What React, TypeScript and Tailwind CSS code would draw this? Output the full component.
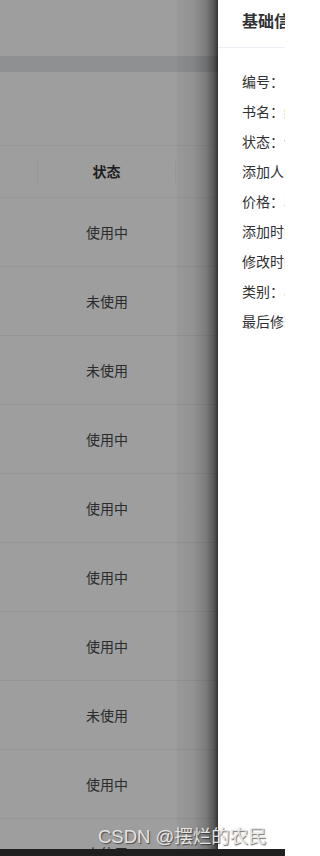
const rows = ['使用中', '未使用', '未使用', '使用中', '使用中', '使用中', '使用中', '未使用', '使用中', '未使用'];

const details = [
  { label: '编号', value: '1001', color: 'text-[#e6a23c]' },
  { label: '书名', value: '红楼梦', color: 'text-[#e6a23c]' },
  { label: '状态', value: '使用中', color: 'text-[#f56c6c]' },
  { label: '添加人', value: 'admin', color: 'text-[#e6a23c]' },
  { label: '价格', value: '36.00', color: 'text-[#f56c6c]' },
  { label: '添加时间', value: '2021-06-01', color: 'text-[#e6a23c]' },
  { label: '修改时间', value: '2021-06-02', color: 'text-[#e6a23c]' },
  { label: '类别', value: '小说', color: 'text-[#f56c6c]' },
  { label: '最后修改人', value: 'admin', color: 'text-[#e6a23c]' },
];

const font = 'font-["Microsoft_YaHei","Noto_Sans_CJK_SC",sans-serif]';

export default function App() {
  return (
    <div className={`flex h-[856px] w-[285px] flex-col overflow-hidden ${font}`}>
      <div className="relative h-[849px] overflow-hidden bg-[#9e9e9e]">
        {/* Page underneath the drawer mask */}
        <div className="h-[56px]" />
        <div className="h-[16px] bg-[#8f9092]" />
        <div className="h-[73px]" />
        <div className="flex h-[53px] items-center border-t border-b border-[#979797] text-[14px] font-bold text-[#1e1f21]">
          <div className="w-[37px] shrink-0" />
          <div className="h-[22px] w-px bg-[#979797]" />
          <div className="w-[137px] shrink-0 text-center">状态</div>
          <div className="h-[22px] w-px bg-[#979797]" />
        </div>
        {rows.map((r, i) => (
          <div key={i} className="flex h-[69px] items-center border-b border-[#959595] text-[14px] text-[#2a2b2d]">
            <div className="w-[38px] shrink-0" />
            <div className="w-[138px] shrink-0 text-center">{r}</div>
          </div>
        ))}

        {/* Drawer shadow */}
        <div className="absolute top-0 bottom-0 left-[177px] w-[41px] bg-[linear-gradient(to_right,rgba(0,0,0,0.03)_0%,rgba(0,0,0,0.08)_40%,rgba(0,0,0,0.22)_70%,rgba(0,0,0,0.45)_90%,rgba(0,0,0,0.68)_100%)]" />

        {/* Drawer */}
        <div className="absolute top-0 bottom-0 left-[218px] w-[420px] bg-white">
          <div className="h-[48px] border-b border-[#ebeef5] pt-[11px] pl-[24px]">
            <h2 className="text-[16px] leading-[18px] font-bold text-[#303133]">基础信息</h2>
          </div>
          <div className="pt-[18px] pl-[24px] text-[14px] leading-[30px] text-[#303133]">
            {details.map((d) => (
              <div key={d.label} className="flex whitespace-nowrap">
                <span>{d.label}：</span>
                <span className={d.color}>{d.value}</span>
              </div>
            ))}
          </div>
        </div>

        {/* Watermark */}
        <div className='absolute bottom-[1px] left-[98px] font-["Liberation_Sans","Noto_Sans_CJK_SC",sans-serif] text-[18.5px] leading-[22px] whitespace-nowrap text-[#e4e4e4] [text-shadow:1px_1px_1px_rgba(0,0,0,0.55)]'>
          CSDN @摆烂的农民
        </div>
      </div>
      <div className="h-[7px] bg-[#1f1f1f]" />
    </div>
  );
}
